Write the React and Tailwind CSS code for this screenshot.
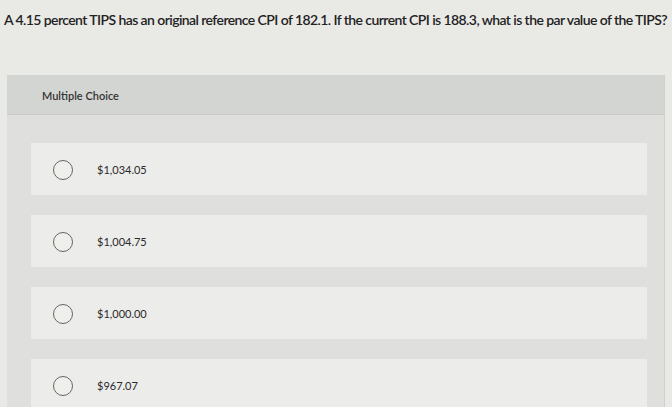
import React from 'react';

const options = ['$1,034.05', '$1,004.75', '$1,000.00', '$967.07'];

const App = () => {
  return (
    <div
      className="w-[672px] h-[407px] overflow-hidden bg-[#e9e9e6] text-[#222]"
      style={{ fontFamily: 'Lato, "Open Sans", sans-serif' }}
    >
      <div className="pt-[11px] pl-[4px] h-[75px]">
        <p className="text-[14px] font-semibold leading-[18px] tracking-[-0.58px] whitespace-nowrap">
          A 4.15 percent TIPS has an original reference CPI of 182.1. If the current CPI is 188.3, what is the par value of the TIPS?
        </p>
      </div>

      <div className="ml-[7px] w-[658px] h-[332px] bg-[#dfe0dd] border-r border-[#cfd0cc]">
        <div className="h-[40px] bg-[#d3d5d2] flex items-center pl-[35px] pt-[3px] border-b border-[#c9cbc8]">
          <span className="text-[11px] font-semibold text-[#333]">Multiple Choice</span>
        </div>

        <div className="pt-[28px] pl-[24px] pr-[17px] flex flex-col gap-[20px]">
          {options.map((opt) => (
            <div key={opt} className="h-[52px] bg-[#ececea] flex items-center pl-[22px] pt-[2px]">
              <span className="w-[20px] h-[20px] rounded-full border-[1.5px] border-[#666] bg-[#efefec]" />
              <span className="ml-[24px] text-[11px] text-[#2a2a2a]">{opt}</span>
            </div>
          ))}
        </div>
      </div>
    </div>
  );
};

export default App;
